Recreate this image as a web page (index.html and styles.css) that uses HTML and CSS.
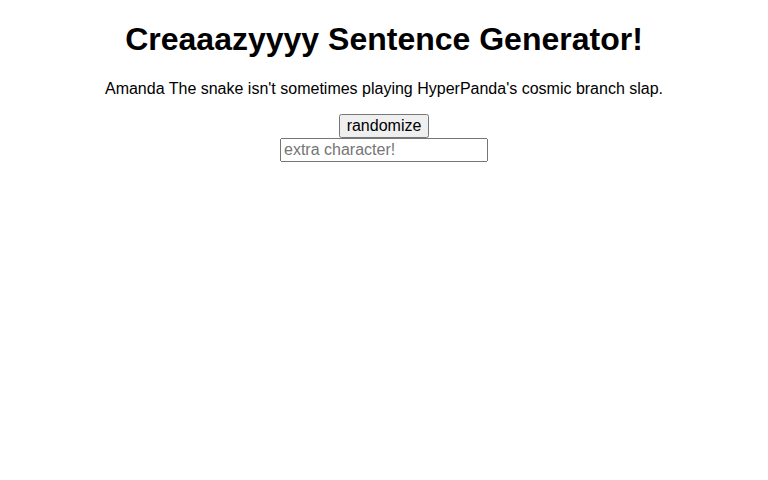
FILE: index.html
```html
<!DOCTYPE html>
<html>
<head>
<meta charset="utf-8">
<link rel="stylesheet" href="styles.css">
</head>
<body>
<div class="app">
  <h1 class="title">Creaaazyyyy Sentence Generator!</h1>
  <p class="sentence">Amanda The snake isn't sometimes playing HyperPanda's cosmic branch slap.</p>
  <button class="btn">randomize</button>
  <br>
  <input class="extra" type="text" placeholder="extra character!">
</div>
</body>
</html>
```
FILE: styles.css
```css
body {
  margin: 0 8px;
  font-family: "Liberation Sans", Arial, sans-serif;
  background: #fff;
  color: #000;
}
.app {
  text-align: center;
}
.title {
  font-size: 32px;
  font-weight: bold;
  margin: 21.44px 0;
}
.sentence {
  font-size: 16px;
  margin: 16px 0;
}
.btn {
  font-family: "Liberation Sans", Arial, sans-serif;
  font-size: 16px;
}
.extra {
  font-family: "Liberation Sans", Arial, sans-serif;
  font-size: 16px;
  width: 200px;
}
```
